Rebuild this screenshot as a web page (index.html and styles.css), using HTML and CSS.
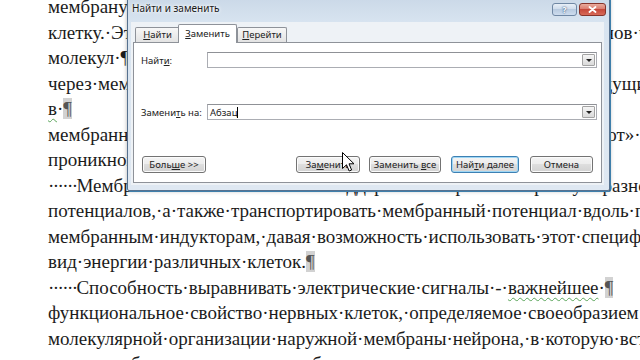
FILE: index.html
```
<!DOCTYPE html>
<html lang="ru">
<head>
    <meta charset="UTF-8">
    <meta name="viewport" content="width=device-width, initial-scale=1.0">
    <title>Найти и заменить</title>
    <link rel="stylesheet" href="styles.css">
</head>
<body>
    <div class="page">
        <div class="line">мембрану·и·поддерживают·их·концентрацию·внутри·</div>
        <div class="line">клетку.·Эти·белки·образуют·особые·каналы·для·прохода·многих·ионов·через·мембрану</div>
        <div class="line">молекул·¶</div>
        <div class="line">через·мембрану·и·создают·разницу·потенциала,·а·также·ионных·ведущих·систем</div>
        <div class="line"><span class="wavy">в</span>·<span class="mark">¶</span></div>
        <div class="line">мембранные·белки·выполняют·тут·роль·своеобразных·«ионных·ворот»·для</div>
        <div class="line">проникновение·ионов·внутрь·клетки.¶</div>
        <div class="line"><span class="indent">······</span>Мембранные·белки·способны·поддерживать·трансмембранную·разность·</div>
        <div class="line">потенциалов,·а·также·транспортировать·мембранный·потенциал·вдоль·по·клетке</div>
        <div class="line">мембранным·индукторам,·давая·возможность·использовать·этот·специфический</div>
        <div class="line">вид·энергии·различных·клеток.<span class="mark">¶</span></div>
        <div class="line"><span class="indent">······</span>Способность·выравнивать·электрические·сигналы·-·<span class="wavy">важнейшее</span>·<span class="mark">¶</span></div>
        <div class="line">функциональное·свойство·нервных·клеток,·определяемое·своеобразием·их</div>
        <div class="line">молекулярной·организации·наружной·мембраны·нейрона,·в·которую·встроены</div>
        <div class="line">встроены·белковые·молекулы,·образующие·ионные·каналы·и·насосы.</div>
    </div>

    <div class="dialog">
        <div class="titlebar">
            <span class="title">Найти и заменить</span>
            <div class="caption">
                <span class="cap-btn cap-help">?</span>
                <span class="cap-btn cap-close">
                    <svg width="9" height="7" viewBox="0 0 9 7"><path d="M1.5 1L7.5 6M7.5 1L1.5 6" stroke="#fff" stroke-width="1.8" stroke-linecap="round"/></svg>
                </span>
            </div>
        </div>
        <div class="client">
            <div class="tabs">
                <div class="tab tab-find"><u>Н</u>айти</div>
                <div class="tab tab-replace active"><u>З</u>аменить</div>
                <div class="tab tab-goto"><u>П</u>ерейти</div>
            </div>
            <div class="panel">
                <div class="field">
                    <label>Найт<u>и</u>:</label>
                    <div class="combo">
                        <span class="value"></span>
                        <span class="arrow"></span>
                    </div>
                </div>
                <div class="field">
                    <label>Замени<u>т</u>ь на:</label>
                    <div class="combo">
                        <span class="value">Абзац<span class="caret"></span></span>
                        <span class="arrow"></span>
                    </div>
                </div>
                <div class="actions">
                    <button class="btn btn-more">Боль<u>ш</u>е &gt;&gt;</button>
                    <button class="btn btn-replace">За<u>м</u>енить</button>
                    <button class="btn btn-all">Заменить <u>в</u>се</button>
                    <button class="btn btn-next default">Най<u>т</u>и далее</button>
                    <button class="btn btn-cancel">Отмена</button>
                </div>
            </div>
        </div>
    </div>

    <svg class="cursor" width="13" height="20" viewBox="0 0 13 20">
        <path d="M0.5 0.5L0.5 16.5L4.5 12.8L7.2 19L9.6 18L7 11.8L12 11.8Z" fill="#fff" stroke="#000" stroke-width="1" stroke-linejoin="round"/>
    </svg>
</body>
</html>
```

FILE: styles.css
```
* {
    box-sizing: border-box;
}

body {
    margin: 0;
    width: 640px;
    height: 360px;
    overflow: hidden;
    position: relative;
    background: #fff;
}

/* document behind the dialog */

.page {
    margin-top: -6px;
    padding-left: 48px;
    font-family: "Liberation Serif", "Times New Roman", serif;
    font-size: 19px;
    line-height: 25.5px;
    color: #1c1c1c;
    white-space: nowrap;
}

.indent {
    letter-spacing: -1.6px;
}

.mark {
    background: #d2d2d2;
    color: #555;
}

.wavy {
    text-decoration: underline wavy #5aa55a;
    text-decoration-thickness: 1px;
    text-underline-offset: 3px;
}

/* find & replace window */

.dialog {
    position: absolute;
    left: 127px;
    top: -2px;
    width: 483px;
    height: 193px;
    display: flex;
    flex-direction: column;
    border: 1px solid #56718f;
    border-radius: 0 0 2px 2px;
    background: linear-gradient(#cbd9e8, #d8e4f0 24px, #dfe8f2);
    box-shadow: 1px 1px 0 #3f7fab, 0 0 4px rgba(0, 0, 0, 0.3);
    font-family: "Noto Sans", sans-serif;
    font-size: 9.5px;
    color: #222;
}

.titlebar {
    height: 23px;
    display: flex;
    align-items: flex-start;
    justify-content: space-between;
}

.title {
    padding: 2px 0 0 4px;
    font-size: 10px;
    line-height: 14px;
    color: #1a1a1a;
    text-shadow: 0 0 5px #fff, 0 0 3px #fff;
}

.caption {
    display: flex;
    gap: 2px;
    margin: 4px 3px 0 0;
}

.cap-btn {
    height: 13px;
    border-radius: 3px;
    display: flex;
    align-items: center;
    justify-content: center;
}

.cap-help {
    width: 25px;
    border: 1px solid #7088a4;
    background: linear-gradient(#e8eff7, #cddbeb 50%, #b9cbe0 50%, #cddcee);
    color: #fff;
    font-weight: bold;
    font-size: 9px;
    text-shadow: 0 0 2px #3b5b82, 0 0 1px #3b5b82;
}

.cap-close {
    width: 27px;
    border: 1px solid #86342b;
    background: linear-gradient(#e9ab9d, #d9776a 50%, #c6483a 50%, #d76a58);
}

.client {
    flex: 1;
    display: flex;
    flex-direction: column;
    margin: 0 5px 5px 3px;
    padding: 0 2px 2px;
    background: #eef2f6;
}

.tabs {
    height: 20px;
    display: flex;
    align-items: flex-end;
    padding-left: 2px;
}

.tab {
    height: 15px;
    line-height: 14px;
    text-align: center;
    border: 1px solid #8e9299;
    border-bottom: none;
    border-radius: 2px 2px 0 0;
    background: linear-gradient(#f7f7f7, #e3e3e3);
}

.tab-find {
    width: 45px;
}

.tab-replace {
    width: 59px;
    margin-left: -2px;
}

.tab-goto {
    width: 50px;
}

.tab.active {
    position: relative;
    z-index: 1;
    height: 19px;
    line-height: 17px;
    margin-bottom: -1px;
    background: #fff;
}

.panel {
    flex: 1;
    border: 1px solid #8e9299;
    background: #fff;
    padding: 9px 4px 0 7px;
}

.field {
    display: flex;
    align-items: center;
    height: 16px;
}

.field + .field {
    margin-top: 36px;
}

.field label {
    width: 66px;
}

.combo {
    flex: 1;
    height: 16px;
    display: flex;
    align-items: center;
    border: 1px solid #abadb3;
    border-top-color: #8f9196;
    background: #fff;
}

.combo .value {
    flex: 1;
    padding-left: 2px;
    display: flex;
    align-items: center;
}

.caret {
    width: 1px;
    height: 11px;
    background: #000;
}

.combo .arrow {
    width: 13px;
    height: 12px;
    margin-right: 1px;
    display: flex;
    align-items: center;
    justify-content: center;
    border: 1px solid #a3a3a3;
    border-radius: 1px;
    background: linear-gradient(#f5f5f5, #dadada);
}

.combo .arrow::after {
    content: "";
    border-left: 3px solid transparent;
    border-right: 3px solid transparent;
    border-top: 3px solid #222;
}

.actions {
    display: flex;
    height: 17px;
    margin-top: 36px;
    padding-right: 4px;
}

.btn {
    height: 17px;
    padding: 0;
    font-family: inherit;
    font-size: 9.5px;
    color: #222;
    border: 1px solid #737373;
    border-radius: 3px;
    background: linear-gradient(#f4f4f4, #ececec 50%, #dedede 50%, #d2d2d2);
    box-shadow: inset 0 0 0 1px #fbfbfb;
}

.btn-more {
    width: 64px;
    margin-left: 1px;
}

.btn-replace {
    width: 64px;
    margin-left: auto;
}

.btn-all {
    width: 72px;
    margin-left: 9px;
}

.btn-next {
    width: 68px;
    margin-left: 10px;
}

.btn-cancel {
    width: 63px;
    margin-left: 11px;
}

.btn.default {
    border-color: #3d80b3;
    box-shadow: inset 0 0 0 1px #9fd7f5;
}

.cursor {
    position: absolute;
    left: 342px;
    top: 152px;
}
```
